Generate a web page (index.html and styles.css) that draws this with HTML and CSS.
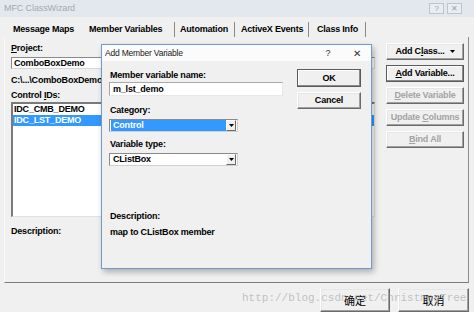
FILE: index.html
```html
<!DOCTYPE html>
<html>
<head>
<meta charset="utf-8">
<link rel="stylesheet" href="styles.css">
</head>
<body>
<div class="win">
  <div class="titlebar">
    <span class="wtitle">MFC ClassWizard</span>
    <div class="caps">
      <span class="cap">?</span>
      <span class="cap">✕</span>
    </div>
  </div>
  <div class="tabs">
    <span class="tab t1">Message Maps</span>
    <span class="tab t2">Member Variables</span>
    <span class="tab t3">Automation</span>
    <span class="tab t4">ActiveX Events</span>
    <span class="tab t5">Class Info</span>
  </div>
  <div class="page">
    <div class="leftcol">
      <div class="lbl"><u>P</u>roject:</div>
      <div class="field proj">ComboBoxDemo</div>
      <div class="lbl path">C:\...\ComboBoxDemo</div>
      <div class="lbl ids">Control <u>I</u>Ds:</div>
      <div class="listbox">
        <div class="item">IDC_CMB_DEMO</div>
        <div class="item sel">IDC_LST_DEMO</div>
      </div>
      <div class="lbl desc">Description:</div>
    </div>
    <div class="btncol">
      <div class="btn"><span>Add C<u>l</u>ass...</span><svg class="tri" width="5" height="3" viewBox="0 0 5 3"><path d="M0 0H5L2.5 3Z" fill="#000"/></svg></div>
      <div class="btn def"><span><u>A</u>dd Variable...</span></div>
      <div class="btn dis"><span><u>D</u>elete Variable</span></div>
      <div class="btn dis"><span>Update <u>C</u>olumns</span></div>
      <div class="btn dis"><span><u>B</u>ind All</span></div>
    </div>
  </div>
  <div class="footer">
    <div class="btn big ok-cn"><span>确定</span></div>
    <div class="btn big cancel-cn"><span>取消</span></div>
  </div>
</div>

<div class="dialog">
  <div class="dtitle">
    <span class="dtext">Add Member Variable</span>
    <span class="dcap q">?</span>
    <span class="dcap x">✕</span>
  </div>
  <div class="dbody">
    <div class="fields">
      <div class="lbl first">Member variable name:</div>
      <div class="edit">m_lst_demo</div>
      <div class="lbl cat">Category:</div>
      <div class="combo">
        <span class="cval hl">Control</span>
        <span class="dd"><svg width="5" height="3" viewBox="0 0 5 3"><path d="M0 0H5L2.5 3Z" fill="#000"/></svg></span>
      </div>
      <div class="lbl vt">Variable type:</div>
      <div class="combo">
        <span class="cval">CListBox</span>
        <span class="dd"><svg width="5" height="3" viewBox="0 0 5 3"><path d="M0 0H5L2.5 3Z" fill="#000"/></svg></span>
      </div>
      <div class="lbl ddesc">Description:</div>
      <div class="lbl dmap">map to CListBox member</div>
    </div>
    <div class="dbtns">
      <div class="btn def okb"><span>OK</span></div>
      <div class="btn cancelb"><span>Cancel</span></div>
    </div>
  </div>
</div>

<div class="watermark">http://blog.csdn.net/ChristmasTree</div>
</body>
</html>
```

FILE: styles.css
```css
* { box-sizing: border-box; }
html, body {
  margin: 0;
  padding: 0;
}
body {
  width: 474px;
  height: 312px;
  overflow: hidden;
  position: relative;
  background: #f0f0f0;
  font-family: "Liberation Sans", Arial, sans-serif;
  font-size: 9px;
  font-weight: bold;
  letter-spacing: -0.2px;
  color: #000;
}
u { text-decoration: underline; text-underline-offset: 1px; }

.win { width: 474px; height: 312px; display: flex; flex-direction: column; }

.titlebar {
  height: 17px;
  background: #e3e8ee;
  display: flex;
  align-items: center;
  justify-content: space-between;
  padding: 0 12px 0 4px;
}
.wtitle {
  font-weight: normal;
  font-size: 9px;
  color: #a3a9b0;
  letter-spacing: -0.1px;
}
.caps { display: flex; gap: 3px; margin-top: 1px; }
.cap {
  width: 15px;
  height: 11px;
  border: 1px solid #bcc4cc;
  background: #e9edf1;
  color: #9aa2aa;
  font-size: 8px;
  font-weight: normal;
  line-height: 9px;
  text-align: center;
}

.tabs {
  height: 20px;
  display: flex;
  align-items: flex-end;
  padding-left: 13px;
}
.tab {
  height: 15px;
  line-height: 11px;
  padding-top: 2px;
  white-space: nowrap;
}
.t1 { width: 76px; }
.t2 { width: 86px; border-right: 1px solid #8a8a8a; }
.t3 { width: 60px; padding-left: 5px; border-right: 1px solid #8a8a8a; }
.t4 { width: 74px; padding-left: 6px; border-right: 1px solid #8a8a8a; }
.t5 { width: 57px; padding-left: 8px; border-right: 1px solid #8a8a8a; }

.page {
  margin-left: 4px;
  width: 465px;
  height: 248px;
  border-right: 1px solid #8c8c8c;
  border-bottom: 1px solid #7c7c7c;
  border-left: 1px solid #fafafa;
  display: flex;
}
.leftcol {
  flex: 1;
  padding: 6px 11px 0 6px;
  display: flex;
  flex-direction: column;
}
.lbl { line-height: 11px; height: 11px; white-space: nowrap; }
.field {
  margin-top: 3px;
  height: 12px;
  line-height: 10px;
  padding-left: 2px;
  background: #fff;
  border: 1px solid #8a8a8a;
  border-right-color: #d8d8d8;
  border-bottom-color: #d8d8d8;
}
.path { margin-top: 6px; }
.ids { margin-top: 4px; }
.listbox {
  margin-top: 1px;
  height: 115px;
  background: #fff;
  border-top: 2px solid #7a7a7a;
  border-left: 2px solid #7a7a7a;
  border-right: 1px solid #e0e0e0;
  border-bottom: 1px solid #e0e0e0;
  padding-left: 0;
}
.item { height: 11px; line-height: 11px; padding-left: 1px; }
.item.sel { background: #3399ff; color: #fff; }
.desc { margin-top: 9px; }

.btncol {
  width: 78px;
  margin-right: 4px;
  padding-top: 6px;
  display: flex;
  flex-direction: column;
  gap: 5px;
}
.btn {
  height: 17px;
  background: #f0f0f0;
  border: 1px solid;
  border-color: #ffffff #6a6a6a #6a6a6a #ffffff;
  box-shadow: inset -1px -1px 0 #a0a0a0, inset 1px 1px 0 #e6e6e6;
  display: flex;
  align-items: center;
  justify-content: center;
  gap: 5px;
  white-space: nowrap;
  line-height: 11px;
}
.btn.def {
  border-color: #5a5a5a;
  box-shadow: inset -1px -1px 0 #8a8a8a, inset 1px 1px 0 #ffffff;
}
.btn.dis { color: #a3a3a3; }
.tri { display: block; margin-top: 1px; }

.footer {
  flex: 1;
  display: flex;
  justify-content: flex-end;
  align-items: flex-start;
  padding: 5px 5px 0 0;
  gap: 8px;
}
.btn.big {
  height: 24px;
  font-family: "Noto Sans CJK SC", sans-serif;
  font-weight: normal;
  font-size: 11px;
  letter-spacing: 0;
  border-top-color: #f0f0f0;
}
.ok-cn { width: 70px; }
.cancel-cn { width: 71px; }

.dialog {
  position: absolute;
  left: 101px;
  top: 44px;
  width: 271px;
  height: 225px;
  background: #f0f0f0;
  border: 1px solid #6f9bc6;
  box-shadow: 2px 3px 6px rgba(0, 0, 0, 0.28);
}
.dtitle {
  height: 16px;
  background: #fbfbfb;
  display: flex;
  align-items: center;
  padding-left: 3px;
}
.dtext {
  font-weight: normal;
  font-size: 8.5px;
  letter-spacing: -0.2px;
  color: #1a1a1a;
  flex: 1;
}
.dcap {
  width: 14px;
  text-align: center;
  font-weight: normal;
  color: #333;
}
.dcap.q { font-size: 9px; }
.dcap.x { font-size: 10px; margin-left: 15px; margin-right: 7px; }

.dbody {
  display: flex;
  padding-left: 7px;
}
.fields {
  width: 174px;
  display: flex;
  flex-direction: column;
}
.fields .lbl { padding-left: 1px; }
.first { margin-top: 9px; }
.edit {
  margin-top: 1px;
  height: 14px;
  background: #fff;
  border: 1px solid #a8a8a8;
  border-right-color: #e8e8e8;
  border-bottom-color: #e8e8e8;
  line-height: 12px;
  padding-left: 3px;
}
.cat { margin-top: 9px; }
.vt { margin-top: 7px; }
.combo {
  margin-top: 3px;
  width: 129px;
  height: 13px;
  background: #fff;
  border: 1px solid #8a8a8a;
  border-right-color: #d0d0d0;
  border-bottom-color: #d0d0d0;
  display: flex;
  padding: 0 1px 0 1px;
}
.cval {
  flex: 1;
  line-height: 11px;
  padding-left: 2px;
}
.cval.hl { background: #3399ff; color: #fff; }
.dd {
  width: 10px;
  height: 11px;
  background: #f0f0f0;
  border: 1px solid;
  border-color: #fff #6a6a6a #6a6a6a #fff;
  display: flex;
  align-items: center;
  justify-content: center;
}
.ddesc { margin-top: 45px; }
.dmap { margin-top: 5px; }

.dbtns {
  margin-left: 14px;
  width: 64px;
  display: flex;
  flex-direction: column;
}
.okb { margin-top: 8px; height: 18px; }
.cancelb { margin-top: 5px; height: 17px; }

.watermark {
  position: absolute;
  left: 242px;
  top: 292px;
  font-family: "Liberation Mono", "Courier New", monospace;
  font-weight: normal;
  font-size: 11px;
  letter-spacing: 0;
  line-height: 12px;
  color: rgba(150, 150, 150, 0.55);
  white-space: nowrap;
}
```
